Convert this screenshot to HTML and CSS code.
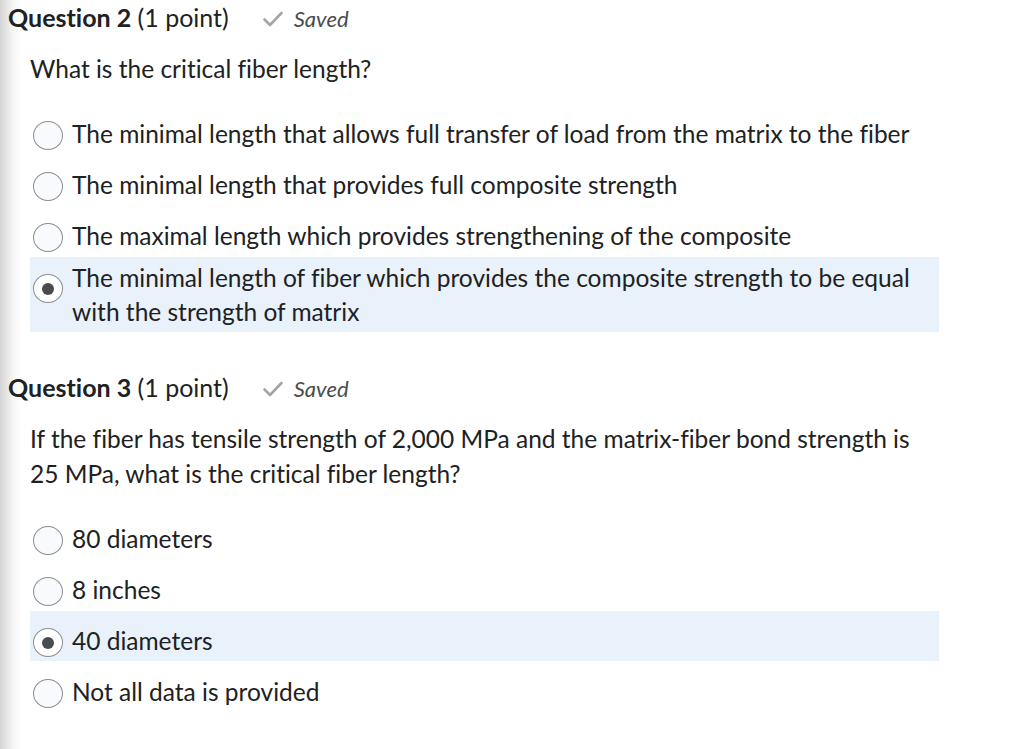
FILE: index.html
```html
<!DOCTYPE html>
<html lang="en">
<head>
<meta charset="utf-8">
<title>Quiz</title>
<link rel="stylesheet" href="styles.css">
</head>
<body>
<main class="page">
  <section class="question">
    <header class="q-head">
      <h2 class="q-title"><b>Question 2</b> (1 point)</h2>
      <span class="saved">
        <svg class="check" viewBox="0 0 22 18" width="22" height="18" aria-hidden="true"><path d="M2.5 9.5 L8 15 L19.5 3" fill="none" stroke="#a3a6a9" stroke-width="2.6" stroke-linecap="round" stroke-linejoin="round"/></svg>
        <i>Saved</i>
      </span>
    </header>
    <p class="q-text">What is the critical fiber length?</p>
    <ul class="options">
      <li class="option"><span class="radio"></span><span class="label">The minimal length that allows full transfer of load from the matrix to the fiber</span></li>
      <li class="option"><span class="radio"></span><span class="label">The minimal length that provides full composite strength</span></li>
      <li class="option"><span class="radio"></span><span class="label">The maximal length which provides strengthening of the composite</span></li>
      <li class="option selected"><span class="radio checked"></span><span class="label">The minimal length of fiber which provides the composite strength to be equal with the strength of matrix</span></li>
    </ul>
  </section>
  <section class="question">
    <header class="q-head">
      <h2 class="q-title"><b>Question 3</b> (1 point)</h2>
      <span class="saved">
        <svg class="check" viewBox="0 0 22 18" width="22" height="18" aria-hidden="true"><path d="M2.5 9.5 L8 15 L19.5 3" fill="none" stroke="#a3a6a9" stroke-width="2.6" stroke-linecap="round" stroke-linejoin="round"/></svg>
        <i>Saved</i>
      </span>
    </header>
    <p class="q-text">If the fiber has tensile strength of 2,000 MPa and the matrix-fiber bond strength is 25 MPa, what is the critical fiber length?</p>
    <ul class="options">
      <li class="option"><span class="radio"></span><span class="label">80 diameters</span></li>
      <li class="option"><span class="radio"></span><span class="label">8 inches</span></li>
      <li class="option selected"><span class="radio checked"></span><span class="label">40 diameters</span></li>
      <li class="option"><span class="radio"></span><span class="label">Not all data is provided</span></li>
    </ul>
  </section>
</main>
</body>
</html>
```

FILE: styles.css
```css
html, body {
  margin: 0;
  padding: 0;
}
body {
  background: linear-gradient(90deg, #d3d3d3 0px, #e6e6e6 7px, #f7f7f7 14px, #ffffff 22px);
  font-family: Lato, "Noto Sans", sans-serif;
  font-variant-ligatures: none;
  color: #202122;
  min-height: 749px;
}
.page {
  padding: 1px 0 0 8px;
}
.question {
  margin-bottom: 39px;
}
.q-head {
  display: flex;
  align-items: baseline;
  height: 32px;
}
.q-title {
  margin: 0;
  font-size: 25px;
  font-weight: 400;
  line-height: 32px;
}
.q-title b {
  font-weight: 700;
}
.saved {
  margin-left: 33px;
  display: flex;
  align-items: baseline;
  gap: 10px;
  color: #494c4e;
  font-size: 22px;
}
.check {
  align-self: center;
  position: relative;
  top: 0px;
}
.q-text {
  margin: 18px 0 0 22px;
  font-size: 24.5px;
  line-height: 35px;
  max-width: 895px;
}
.options {
  list-style: none;
  margin: 18px 0 0 22px;
  padding: 0;
  width: 909px;
}
.option {
  display: flex;
  align-items: flex-start;
  padding: 4px 0 3px 3px;
  margin-bottom: 1px;
  font-size: 24.5px;
  line-height: 34px;
}
.option.selected {
  background: #e9f1fb;
}
.radio {
  flex: none;
  box-sizing: border-box;
  width: 30px;
  height: 29px;
  margin: 13px 9px 0 0;
  border: 1.5px solid #8a8d90;
  border-radius: 50%;
  background: #f9fafd;
  display: flex;
  align-items: center;
  justify-content: center;
}
.radio.checked {
  background: #ffffff;
}
.radio.checked::after {
  content: "";
  width: 12px;
  height: 12px;
  border-radius: 50%;
  background: #494c4e;
}
.label {
  min-height: 43px;
  display: flex;
  align-items: flex-end;
}
```
